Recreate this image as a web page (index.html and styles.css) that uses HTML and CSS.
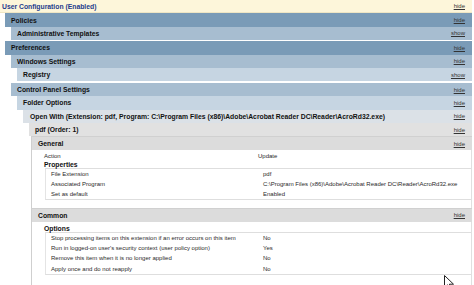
FILE: index.html
```html
<!DOCTYPE html>
<html lang="en">
<head>
    <meta charset="UTF-8">
    <title>Group Policy Results - User Configuration</title>
    <link rel="stylesheet" href="styles.css">
</head>
<body>
    <div class="report">
        <div class="hdr hdr-root">User Configuration (Enabled) <a href="#">hide</a></div>
        <div class="kids kids-root">
            <div class="hdr hdr-1">Policies <a href="#">hide</a></div>
            <div class="kids">
                <div class="hdr hdr-2">Administrative Templates <a href="#">show</a></div>
            </div>

            <div class="hdr hdr-1 gap-a">Preferences <a href="#">hide</a></div>
            <div class="kids">
                <div class="hdr hdr-2">Windows Settings <a href="#">hide</a></div>
                <div class="kids">
                    <div class="hdr hdr-3">Registry <a href="#">show</a></div>
                </div>

                <div class="hdr hdr-2 gap-b">Control Panel Settings <a href="#">hide</a></div>
                <div class="kids">
                    <div class="hdr hdr-3">Folder Options <a href="#">hide</a></div>
                    <div class="kids">
                        <div class="hdr hdr-4">Open With (Extension: pdf, Program: C:\Program Files (x86)\Adobe\Acrobat Reader DC\Reader\AcroRd32.exe) <a href="#">hide</a></div>
                        <div class="kids">
                            <div class="hdr hdr-5">pdf (Order: 1) <a href="#">hide</a></div>
                            <div class="kids kids-panel">
                                <div class="hdr hdr-6">General <a href="#">hide</a></div>
                                <div class="panel panel-general">
                                    <div class="info-row">
                                        <span>Action</span>
                                        <span>Update</span>
                                    </div>
                                    <div class="sub">Properties</div>
                                    <div class="box">
                                        <div class="box-row"><span>File Extension</span><span>pdf</span></div>
                                        <div class="box-row"><span>Associated Program</span><span>C:\Program Files (x86)\Adobe\Acrobat Reader DC\Reader\AcroRd32.exe</span></div>
                                        <div class="box-row"><span>Set as default</span><span>Enabled</span></div>
                                    </div>
                                </div>

                                <div class="hdr hdr-6 hdr-common">Common <a href="#">hide</a></div>
                                <div class="panel panel-common">
                                    <div class="sub">Options</div>
                                    <div class="box">
                                        <div class="box-row"><span>Stop processing items on this extension if an error occurs on this item</span><span>No</span></div>
                                        <div class="box-row"><span>Run in logged-on user's security context (user policy option)</span><span>Yes</span></div>
                                        <div class="box-row"><span>Remove this item when it is no longer applied</span><span>No</span></div>
                                        <div class="box-row"><span>Apply once and do not reapply</span><span>No</span></div>
                                    </div>
                                </div>
                            </div>
                        </div>
                    </div>
                </div>
            </div>
        </div>

        <!-- mouse pointer caught in the screenshot -->
        <svg class="cursor" width="11" height="16" viewBox="0 0 11 16">
            <path d="M0.5 0.5 L0.5 12.5 L3.5 9.8 L5.8 15 L7.6 14.2 L5.4 9.2 L9.5 9.2 Z" fill="#fff" stroke="#222" stroke-width="1"/>
        </svg>
    </div>
</body>
</html>
```

FILE: styles.css
```css
:root {
    --root-bg: #fdf6da;
    --root-text: #1d3b8c;
    --lvl1-bg: #7a9bb7;
    --lvl2-bg: #a7bdd0;
    --lvl3-bg: #c6d5e2;
    --lvl4-bg: #dbe1e7;
    --lvl5-bg: #e1e1e1;
    --lvl6-bg: #dcdcdc;
    --line: #cfcfcf;
    --text: #2a2a2a;
}

* {
    box-sizing: border-box;
    margin: 0;
    padding: 0;
}

body {
    font-family: 'Liberation Sans', Arial, sans-serif;
    font-size: 6px;
    color: var(--text);
    background-color: #fff;
}

.report {
    position: relative;
    width: 472px;
    height: 285px;
    overflow: hidden;
}

.hdr {
    display: flex;
    justify-content: space-between;
    align-items: center;
    height: 13.4px;
    padding: 0 7px 0 6px;
    font-size: 6.8px;
    font-weight: bold;
    color: #111;
    white-space: nowrap;
}

.hdr a {
    font-size: 6px;
    font-weight: normal;
    color: #333;
    text-decoration: underline;
}

.hdr-root {
    background-color: var(--root-bg);
    color: var(--root-text);
    padding-left: 2px;
    border-bottom: 1px solid #efe6c4;
}

.hdr-1 { background-color: var(--lvl1-bg); }
.hdr-2 { background-color: var(--lvl2-bg); }
.hdr-3 { background-color: var(--lvl3-bg); }
.hdr-4 { background-color: var(--lvl4-bg); padding-left: 7px; }
.hdr-5 { background-color: var(--lvl5-bg); }

.hdr-6 {
    background-color: var(--lvl6-bg);
    border-left: 1px solid var(--line);
    border-top: 1px solid #d0d0d0;
    padding-left: 6px;
}

.gap-a { margin-top: 1px; }
.gap-b { margin-top: 1.5px; }

.kids {
    padding-left: 6px;
}

.kids-root {
    padding-left: 5px;
}

.kids-panel {
    padding-left: 2px;
}

/* white detail panels under General / Common */
.panel {
    background-color: #fff;
    border-left: 1px solid var(--line);
    border-right: 1px solid #e0e0e0;
    padding-left: 12px;
}

.panel-general {
    padding-top: 1px;
    padding-bottom: 8.5px;
}

.panel-common {
    padding-top: 3px;
    padding-bottom: 20px;
}

.info-row {
    display: grid;
    grid-template-columns: 214px 1fr;
    height: 10px;
    line-height: 10px;
}

.sub {
    font-size: 6.8px;
    font-weight: bold;
    color: #111;
    line-height: 7px;
}

.box {
    margin-left: 1px;
    border-top: 1px solid #dedede;
    border-bottom: 1px solid #dedede;
    border-left: 1px solid #e4e4e4;
    padding-left: 5px;
}

.box-row {
    display: grid;
    grid-template-columns: 212px 1fr;
    height: 10px;
    line-height: 10px;
    white-space: nowrap;
}

.panel-common .box-row {
    height: 10.3px;
    line-height: 10.3px;
}

.cursor {
    position: absolute;
    left: 444px;
    top: 275px;
}
```
